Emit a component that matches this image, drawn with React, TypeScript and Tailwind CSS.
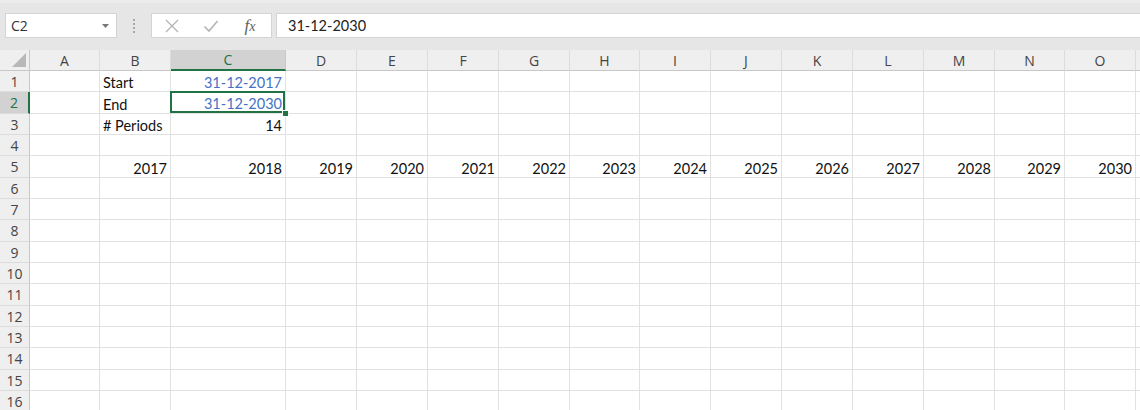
import React from "react";

const colLetters = ["A", "B", "C", "D", "E", "F", "G", "H", "I", "J", "K", "L", "M", "N", "O", "P"];
const rowHeights = [21, 22, 21, 21, 22, 21, 21, 22, 21, 21, 22, 21, 21, 22, 21, 21];

type Cell = { text: string; align: "left" | "right"; blue?: boolean };

const data: Record<string, Cell> = {
  B1: { text: "Start", align: "left" },
  C1: { text: "31-12-2017", align: "right", blue: true },
  B2: { text: "End", align: "left" },
  C2: { text: "31-12-2030", align: "right", blue: true },
  B3: { text: "# Periods", align: "left" },
  C3: { text: "14", align: "right" },
};
const years = [2017, 2018, 2019, 2020, 2021, 2022, 2023, 2024, 2025, 2026, 2027, 2028, 2029, 2030];
years.forEach((y, i) => {
  data[colLetters[i + 1] + "5"] = { text: String(y), align: "right" };
});

function TopBar() {
  return (
    <div className="h-[50px] bg-[#e6e6e6] border-t-[3px] border-[#ececec] flex items-start pt-[10px]">
      <div className="ml-[5px] w-[112px] h-[25px] bg-white border border-[#d4d4d4] flex items-center justify-between pl-[5px] pr-[7px]">
        <span className="text-[14px] text-[#333]" style={{ fontFamily: "'Open Sans', sans-serif" }}>C2</span>
        <svg width="7" height="4" viewBox="0 0 7 4"><path d="M0 0h7L3.5 4z" fill="#777" /></svg>
      </div>
      <div className="w-[34px] h-[25px] flex flex-col items-center justify-center gap-[2px]">
        <span className="w-[2px] h-[2px] bg-[#a8a8a8]" />
        <span className="w-[2px] h-[2px] bg-[#a8a8a8]" />
        <span className="w-[2px] h-[2px] bg-[#a8a8a8]" />
        <span className="w-[2px] h-[2px] bg-[#a8a8a8]" />
      </div>
      <div className="w-[121px] h-[25px] bg-white border border-[#d4d4d4] flex items-center">
        <div className="w-[40px] flex justify-center">
          <svg width="14" height="14" viewBox="0 0 14 14"><path d="M1 1L13 13M13 1L1 13" stroke="#b4b4b4" strokeWidth="1.3" /></svg>
        </div>
        <div className="w-[38px] flex justify-center">
          <svg width="16" height="14" viewBox="0 0 16 14"><path d="M1.5 7.5L6 12L14.5 2" stroke="#b4b4b4" strokeWidth="1.6" fill="none" /></svg>
        </div>
        <div className="w-[40px] flex justify-center">
          <span className="text-[17px] italic text-[#606060] leading-none" style={{ fontFamily: "'Liberation Serif', serif" }}>
            f<span className="text-[14px]">x</span>
          </span>
        </div>
      </div>
      <div className="ml-[4px] flex-1 h-[25px] bg-white border border-[#d4d4d4] border-r-0 flex items-center pl-[11px]">
        <span className="text-[14.5px] text-[#222]" style={{ fontFamily: "'Lato', sans-serif" }}>31-12-2030</span>
      </div>
    </div>
  );
}

function HeaderRow() {
  return (
    <div className="flex h-[21px] bg-[#efefef]" style={{ fontFamily: "'Open Sans', sans-serif" }}>
      <div className="w-[30px] h-full border-r border-b border-[#c8c8c8] relative shrink-0">
        <svg className="absolute right-[3px] bottom-[3px]" width="14" height="14" viewBox="0 0 14 14"><path d="M14 0V14H0z" fill="#b8b8b8" /></svg>
      </div>
      <ColHeaders />
    </div>
  );
}

const colWidthClasses = [
  "w-[70px]", "w-[71px]", "w-[115px]", "w-[71px]", "w-[71px]", "w-[71px]", "w-[71px]", "w-[70px]",
  "w-[71px]", "w-[71px]", "w-[71px]", "w-[71px]", "w-[71px]", "w-[70px]", "w-[71px]", "w-[71px]",
];

function ColHeaders() {
  return (
    <>
      {colLetters.map((l, i) => {
        const sel = l === "C";
        return (
          <div
            key={l}
            className={`${colWidthClasses[i]} shrink-0 h-full flex items-center justify-center text-[14px] border-r ${
              sel
                ? "bg-[#d2d2d2] text-[#217346] border-b-2 border-b-[#217346] border-r-[#c8c8c8]"
                : "text-[#444] border-b border-b-[#c8c8c8] border-r-[#dcdcdc]"
            }`}
          >
            {l === "P" ? null : l}
          </div>
        );
      })}
    </>
  );
}

function Row({ r, h }: { r: number; h: number }) {
  const selRow = r === 2;
  return (
    <div className={`flex ${h === 22 ? "h-[22px]" : "h-[21px]"}`}>
      <div
        className={`w-[30px] shrink-0 h-full flex items-center justify-center text-[14px] border-b border-b-[#dcdcdc] ${
          selRow
            ? "bg-[#d2d2d2] text-[#217346] border-r-2 border-r-[#217346]"
            : "bg-[#efefef] text-[#444] border-r border-r-[#c8c8c8]"
        }`}
        style={{ fontFamily: "'Open Sans', sans-serif" }}
      >
        {r}
      </div>
      {colLetters.map((l, i) => {
        const cell = data[l + r];
        const selected = l === "C" && r === 2;
        return (
          <div
            key={l}
            className={`${colWidthClasses[i]} shrink-0 h-full relative border-r border-b border-[#e1e1e1] flex items-end px-[3px] text-[14.5px] leading-[17px] ${
              selected ? "pb-[1px] z-10" : "pb-0"
            } ${cell && cell.align === "right" ? "justify-end" : "justify-start"} ${
              cell && cell.blue ? "text-[#4472c4]" : "text-[#111]"
            }`}
            style={{ fontFamily: "'Lato', sans-serif" }}
          >
            {cell ? cell.text : null}
            {selected && (
              <>
                <div className="absolute -left-[1px] -top-[1px] right-0 bottom-0 border-2 border-[#217346] pointer-events-none" />
                <div className="absolute -right-[4px] -bottom-[4px] w-[7px] h-[7px] bg-[#217346] border border-white" />
              </>
            )}
          </div>
        );
      })}
    </div>
  );
}

export default function App() {
  return (
    <div className="w-[1140px] h-[410px] overflow-hidden bg-white">
      <TopBar />
      <HeaderRow />
      {rowHeights.map((h, i) => (
        <Row key={i} r={i + 1} h={h} />
      ))}
    </div>
  );
}
